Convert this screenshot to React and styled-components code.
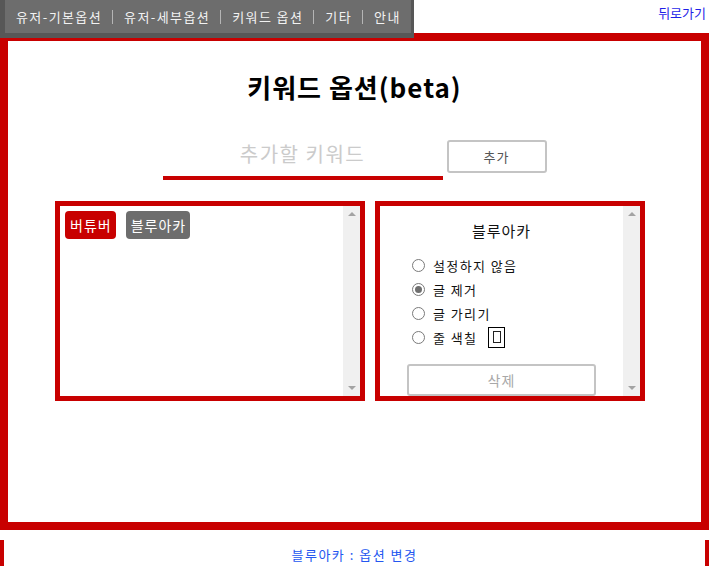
import React from 'react';
import styled, { createGlobalStyle } from 'styled-components';

const GlobalStyle = createGlobalStyle`
    * { box-sizing: border-box; }
    body {
        margin: 0;
        font-family: "Noto Sans CJK KR", "Noto Sans", sans-serif;
        background: #fff;
        color: #111;
    }
`

const Header = styled.header`
    display: flex;
    justify-content: space-between;
    height: 33px;
`

const Nav = styled.nav`
    position: relative;
    z-index: 1;
    display: flex;
    align-items: center;
    height: 38px;
    background: #6d6d6d;
    border-left: 5px solid #575757;
    border-right: 3px solid #575757;
    border-bottom: 5px solid #575757;
`

const NavItem = styled.a`
    padding: 0 10px 0 11px;
    color: #f2f2f2;
    font-size: 13px;
    line-height: 14px;
    letter-spacing: 1.4px;
    border-left: ${p => (p.first ? 'none' : '1px solid #b5b5b5')};
    cursor: pointer;
`

const BackLink = styled.a`
    padding: 4px 3px 0 0;
    color: #1f1fe8;
    font-size: 13px;
    line-height: 18px;
`

const Frame = styled.main`
    height: 497px;
    border: 8px solid #c80000;
    display: flex;
    flex-direction: column;
    align-items: center;
`

const Title = styled.h1`
    margin: 28px 0 0;
    font-size: 26px;
    line-height: 36px;
    font-weight: 700;
    letter-spacing: 1px;
    color: #000;
`

const AddRow = styled.div`
    display: flex;
    align-items: flex-start;
    gap: 4px;
    margin-top: 32px;
`

const KeywordInput = styled.input`
    width: 280px;
    height: 43px;
    padding: 0 0 6px;
    border: none;
    border-bottom: 4px solid #c80000;
    outline: none;
    text-align: center;
    font-family: inherit;
    font-size: 20px;
    letter-spacing: 1.5px;
    &::placeholder { color: #cbcbcb; }
`

const Button = styled.button`
    width: ${p => p.width}px;
    height: ${p => p.height || 33}px;
    margin-top: ${p => p.top || 0}px;
    background: #fff;
    border: 2px solid #c4c4c4;
    border-radius: 3px;
    color: ${p => p.muted ? '#a8a8a8' : '#555'};
    font-family: inherit;
    font-size: ${p => p.size || 13}px;
    letter-spacing: 1px;
`

const Panels = styled.div`
    align-self: flex-start;
    display: flex;
    gap: 10px;
    margin: 21px 0 0 47px;
`

const Panel = styled.section`
    display: flex;
    width: ${p => p.width}px;
    height: 200px;
    border: 5px solid #c80000;
`

const PanelBody = styled.div`
    flex: 1;
    overflow: hidden;
`

const ChipList = styled.div`
    display: flex;
    gap: 10px;
    padding: 5px;
`

const Chip = styled.span`
    padding: 0 4px 0 5px;
    height: 28px;
    line-height: 28px;
    border-radius: 4px;
    font-size: 14px;
    letter-spacing: 1px;
    color: #fff;
    background: ${p => (p.active ? '#c80000' : '#6d6d6d')};
`

const Scrollbar = styled.div`
    width: 17px;
    background: #f0f0f0;
    display: flex;
    flex-direction: column;
    justify-content: space-between;
    align-items: center;
    padding: 6px 0;
`

const Arrow = styled.span`
    width: 0;
    height: 0;
    border-left: 4px solid transparent;
    border-right: 4px solid transparent;
    border-${p => (p.down ? 'top' : 'bottom')}: 4px solid #a3a3a3;
`

const OptionBody = styled(PanelBody)`
    display: flex;
    flex-direction: column;
    align-items: center;
    padding-top: 15px;
`

const OptionTitle = styled.h2`
    margin: 0;
    font-size: 15px;
    line-height: 20px;
    font-weight: 400;
    letter-spacing: 1px;
`

const RadioList = styled.div`
    align-self: stretch;
    margin-top: 12px;
    padding-left: 32px;
`

const RadioRow = styled.label`
    display: flex;
    align-items: center;
    gap: 8px;
    height: 24px;
    font-size: 13px;
    letter-spacing: 1.4px;
    color: #111;
`

const Radio = styled.span`
    width: 13px;
    height: 13px;
    border: 1px solid #7a7a7a;
    border-radius: 50%;
    display: flex;
    align-items: center;
    justify-content: center;
    &::after {
        content: '';
        width: 7px;
        height: 7px;
        border-radius: 50%;
        background: ${p => (p.checked ? '#6f6f6f' : 'transparent')};
    }
`

const ColorBox = styled.span`
    width: 17px;
    height: 21px;
    margin-left: 3px;
    border: 1px solid #000;
    display: flex;
    align-items: center;
    justify-content: center;
    &::after {
        content: '';
        width: 6px;
        height: 10px;
        border: 1px solid #222;
    }
`

const Footer = styled.footer`
    margin-top: 10px;
    height: 40px;
    padding-top: 5px;
    border-left: 4px solid #c80000;
    border-right: 4px solid #c80000;
    text-align: center;
    font-size: 13px;
    line-height: 20px;
    letter-spacing: 1.5px;
    color: #2457f0;
`

const menu = ['유저-기본옵션', '유저-세부옵션', '키워드 옵션', '기타', '안내'];
const keywords = [
    { name: '버튜버', active: true },
    { name: '블루아카', active: false },
];
const options = ['설정하지 않음', '글 제거', '글 가리기', '줄 색칠'];

export default function App() {
    return (
        <>
            <GlobalStyle />
            <Header>
                <Nav>
                    {menu.map((m, i) => (
                        <NavItem key={m} first={i === 0}>{m}</NavItem>
                    ))}
                </Nav>
                <BackLink>뒤로가기</BackLink>
            </Header>
            <Frame>
                <Title>키워드 옵션(beta)</Title>
                <AddRow>
                    <KeywordInput placeholder="추가할 키워드" />
                    <Button width={100} top={3}>추가</Button>
                </AddRow>
                <Panels>
                    <Panel width={310}>
                        <PanelBody>
                            <ChipList>
                                {keywords.map(k => (
                                    <Chip key={k.name} active={k.active}>{k.name}</Chip>
                                ))}
                            </ChipList>
                        </PanelBody>
                        <Scrollbar><Arrow /><Arrow down /></Scrollbar>
                    </Panel>
                    <Panel width={270}>
                        <OptionBody>
                            <OptionTitle>블루아카</OptionTitle>
                            <RadioList>
                                {options.map((o, i) => (
                                    <RadioRow key={o}>
                                        <Radio checked={i === 1} />
                                        {o}
                                        {i === 3 && <ColorBox />}
                                    </RadioRow>
                                ))}
                            </RadioList>
                            <Button width={189} height={32} top={15} size={14} muted>삭제</Button>
                        </OptionBody>
                        <Scrollbar><Arrow /><Arrow down /></Scrollbar>
                    </Panel>
                </Panels>
            </Frame>
            <Footer>블루아카 : 옵션 변경</Footer>
        </>
    );
}
